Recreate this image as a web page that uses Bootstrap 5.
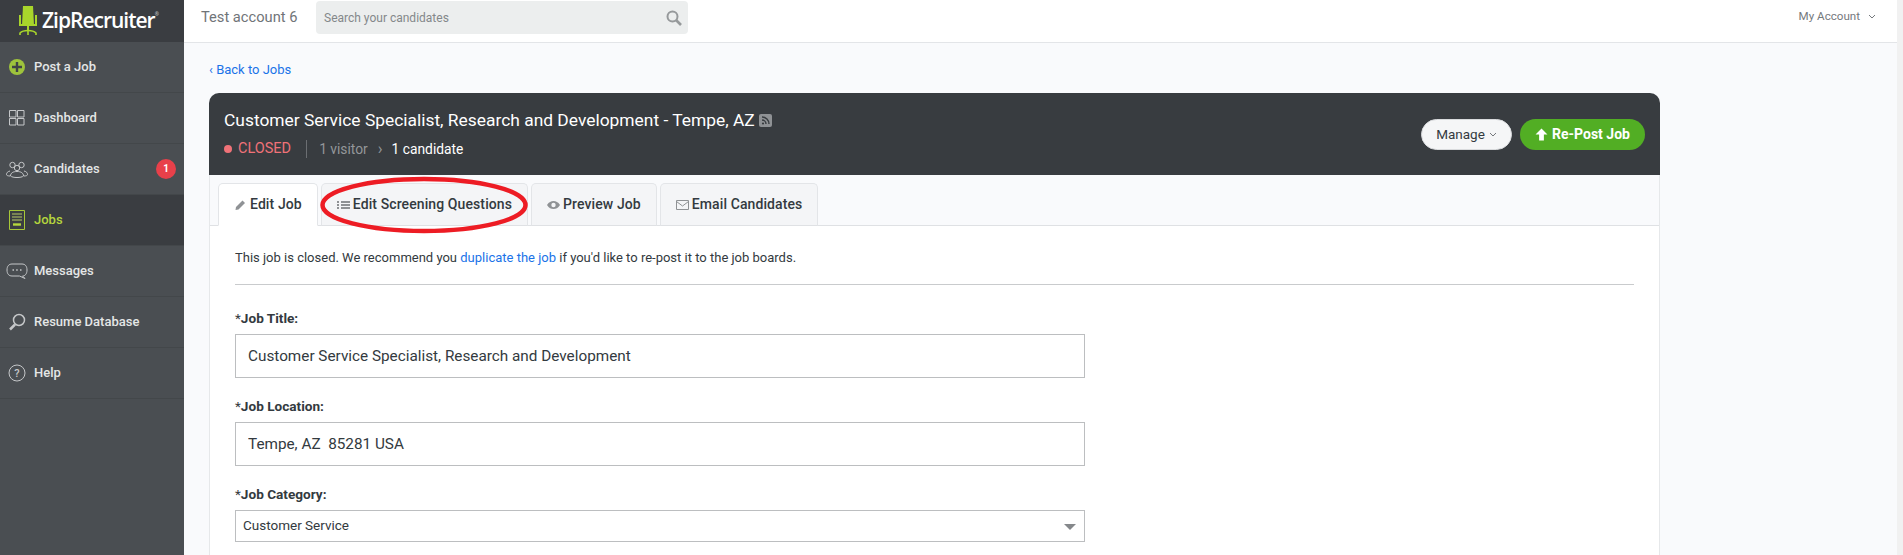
<!DOCTYPE html>
<html lang="en">
<head>
<meta charset="UTF-8">
<title>Edit Job</title>
<link rel="stylesheet" href="https://cdn.jsdelivr.net/npm/bootstrap@5.3.3/dist/css/bootstrap.min.css">
<style>
html, body { height: 555px; overflow: hidden; }
body { font-family: Roboto, "Liberation Sans", sans-serif; font-size: 13px; background: #f9fafc; color: #333a40; }
.app-shell { height: 555px; }
.side-col { width: 184px; flex: none; background: #4a4e52; }
.side-logo { height: 42px; background: #3a3d41; padding-left: 19px; gap: 5px; }
.logo-word { font-family: "Open Sans", sans-serif; font-size: 21px; font-weight: 600; color: #fff; letter-spacing: -1px; }
.logo-word sup { font-size: 5px; top: -12px; letter-spacing: 0; color: #c5c7c9; }
.side-item { height: 51px; padding-left: 6px; gap: 6px; color: #e4e6e6; font-size: 13px; font-weight: 500; border-bottom: 1px solid #43474a; text-decoration: none; position: relative; }
.side-item:hover { color: #fff; }
.side-item.is-on { background: #3a3d41; color: #b5d63d; }
.side-ico { width: 22px; height: 22px; flex: none; }
.side-badge { position: absolute; right: 8px; top: 15px; width: 20px; height: 20px; padding: 0; line-height: 20px; border-radius: 50%; background: #e8404a; font-size: 10px; }
.main-col { min-width: 0; }
.top-strip { height: 43px; background: #fff; border-bottom: 1px solid #e3e5e8; padding-left: 17px; padding-right: 21px; }
.acct-name { font-size: 14.7px; color: #707478; width: 115px; flex: none; white-space: nowrap; margin-top: 8px; line-height: 18px; }
.search-box { width: 372px; height: 33px; background: #eceeee; border-radius: 4px; margin-top: 1px; padding: 0 6px 0 8px; }
.search-box span { font-size: 12px; color: #84888a; }
.my-acct { font-size: 11.6px; color: #75797d; margin-top: 9px; line-height: 14px; }
.scroll-strip { width: 6px; flex: none; background: #f1f1f1; }
.page-wrap { padding: 20px 0 0 25px; width: 1476px; }
.back-link { font-size: 13px; color: #1a73e8; text-decoration: none; display: block; line-height: 14px; margin-bottom: 16px; }
.job-panel { position: relative; }
.job-head { height: 82px; background: #383c40; border-radius: 10px 10px 0 0; padding: 0 15px; color: #fff; }
.job-title { font-size: 17.4px; font-weight: 400; margin: 0 0 10px; line-height: 20px; }
.job-meta { font-size: 13.8px; color: #94979a; line-height: 16px; }
.closed-txt { color: #f07278; font-size: 14.5px; }
.closed-dot { width: 8px; height: 8px; border-radius: 50%; background: #f07278; display: inline-block; margin-right: 6px; }
.meta-rule { width: 1px; height: 18px; background: #6b6e72; margin: 0 12px 0 15px; }
.meta-sep { margin: 0 9px 0 10px; font-size: 16px; line-height: 16px; }
.btn-manage { background: #f5f6f7; color: #333a40; font-size: 13.5px; height: 31px; width: 91px; padding: 0; justify-content: center; border: 1px solid #d9dbdd; }
.btn-repost { background: #52ae24; color: #fff; font-size: 14px; font-weight: 700; height: 31px; width: 125px; padding: 0; justify-content: center; border: 0; }
.tab-area { border-left: 1px solid #e6e8ea; border-right: 1px solid #e6e8ea; padding: 8px 8px 0; }
.job-tabs { border-bottom: 1px solid #dfe1e4; gap: 3px; margin: 0 -8px; padding: 0 8px; }
.job-tabs .nav-link { height: 43px; margin-bottom: -1px; padding: 0 15px; font-size: 14px; font-weight: 500; color: #333a40; background: #f4f5f7; border: 1px solid #e3e5e8; border-bottom-color: #dfe1e4; border-radius: 5px 5px 0 0; display: flex; align-items: center; gap: 3px; letter-spacing: .1px; }
.job-tabs .nav-link.active { background: #fff; border-bottom-color: #fff; }
.tab-ico { width: 13px; height: 12px; flex: none; }
.form-area { background: #fff; border-left: 1px solid #e6e8ea; border-right: 1px solid #e6e8ea; padding: 24px 25px 0; height: 330px; }
.closed-note { font-size: 13px; line-height: 16px; margin-bottom: 18px; }
.closed-note a { color: #1a73e8; text-decoration: none; }
.form-area hr { margin: 0 0 26px; border-color: #c9cbcd; opacity: 1; }
.job-label { font-size: 13.6px; font-weight: 700; line-height: 15px; margin-bottom: 8px; display: block; }
.job-label i { font-style: normal; font-weight: 400; }
.job-input { width: 850px; height: 44px; border: 1px solid #bcbec0; border-radius: 0; font-size: 15.3px; color: #333a40; padding: 0 12px; margin-bottom: 21px; }
.job-select { width: 850px; height: 32px; border: 1px solid #bcbec0; border-radius: 0; font-size: 13.5px; color: #333a40; padding: 0 7px 2px; background-image: none; }
.select-wrap { width: 850px; position: relative; }
.select-arrow { position: absolute; right: 9px; top: 14px; width: 0; height: 0; border-left: 6px solid transparent; border-right: 6px solid transparent; border-top: 6px solid #85888b; }
.red-ring { position: absolute; left: 111px; top: 83px; width: 208px; height: 58px; pointer-events: none; }
</style>
</head>
<body>
<div class="app-shell d-flex">
  <nav class="side-col d-flex flex-column">
    <div class="side-logo d-flex align-items-center">
      <svg width="18" height="30" viewBox="0 0 18 30" fill="none"><path d="M4 0h10l1 19H3z" fill="#a8d52b"/><path d="M0 9h2v9h14V9h2v11H0z" fill="#a8d52b"/><path d="M8 20h2v5H8z" fill="#a8d52b"/><path d="M1 29v-2c2-2 5-2.500 8-2.500s6 .5 8 2.500v2" stroke="#a8d52b" stroke-width="1.600"/><path d="M9 25v4" stroke="#a8d52b" stroke-width="1.600"/></svg>
      <span class="logo-word">ZipRecruiter<sup>®</sup></span>
    </div>
    <a class="side-item d-flex align-items-center" href="#">
      <svg class="side-ico" viewBox="0 0 22 22"><circle cx="11" cy="11" r="8" fill="#9ec33c"/><path d="M11 6v10M6 11h10" stroke="#3f4347" stroke-width="2.400"/></svg>Post a Job</a>
    <a class="side-item d-flex align-items-center" href="#">
      <svg class="side-ico" viewBox="0 0 22 22" fill="none" stroke="#c5c7c9"><path d="M3.500 3.500h6.500v6.500H3.500zM11.500 3.500H18v6.500h-6.500zM3.500 11.500h6.500V18H3.500zM11.500 11.500H18V18h-6.500z"/></svg>Dashboard</a>
    <a class="side-item d-flex align-items-center" href="#">
      <svg class="side-ico" viewBox="0 0 22 22" fill="none" stroke="#c5c7c9"><circle cx="6.500" cy="7" r="2.700"/><circle cx="15.500" cy="7" r="2.700"/><circle cx="11" cy="10" r="2.700"/><path d="M4 13C1.500 13.500.5 15 .5 16.500c0 1 1.500 1.500 3.500 1.500M18 13c2.500.5 3.500 2 3.500 3.500 0 1-1.500 1.500-3.500 1.500M4.500 18c0-3 2.500-4.500 6.500-4.500s6.500 1.500 6.500 4.500c-2 2-11 2-13 0z"/></svg>Candidates
      <span class="badge side-badge">1</span></a>
    <a class="side-item is-on d-flex align-items-center" href="#">
      <svg class="side-ico" viewBox="0 0 22 22" fill="none" stroke="#b5d63d"><path d="M3.500 1.500h15v19h-15z" stroke="#a8c838"/><path d="M6 5h10M6 8h10M6 11h10" stroke="#8e9a5a" stroke-width="1.400"/><path d="M7 15.500h8" stroke-width="2.400"/></svg>Jobs</a>
    <a class="side-item d-flex align-items-center" href="#">
      <svg class="side-ico" viewBox="0 0 22 22" fill="none" stroke="#c5c7c9"><path d="M6 4h10c3 0 5 2 5 6s-2 6-4.500 6l2.500 2.500-5.500-2.500H6c-3 0-5-2-5-6s2-6 5-6z"/><path d="M6.500 10H8M10.200 10h1.500M14 10h1.500" stroke-width="1.600"/></svg>Messages</a>
    <a class="side-item d-flex align-items-center" href="#">
      <svg class="side-ico" viewBox="0 0 22 22" fill="none" stroke="#c5c7c9"><circle cx="13" cy="9" r="5.500" stroke-width="1.500"/><path d="M9 13.500 4 18.500" stroke-width="2.500"/></svg>Resume Database</a>
    <a class="side-item d-flex align-items-center" href="#">
      <svg class="side-ico" viewBox="0 0 22 22" fill="none" stroke="#c5c7c9"><circle cx="11" cy="11" r="8"/><text x="11" y="15" font-size="11" text-anchor="middle" fill="#c5c7c9" stroke="none" font-family="Roboto">?</text></svg>Help</a>
  </nav>

  <div class="main-col flex-grow-1">
    <header class="top-strip d-flex align-items-start">
      <span class="acct-name">Test account 6</span>
      <div class="search-box d-flex align-items-center justify-content-between">
        <span>Search your candidates</span>
        <svg width="16" height="16" viewBox="0 0 16 16" fill="none" stroke="#96999b" stroke-width="2"><circle cx="6.500" cy="6.500" r="5"/><path d="M10 10l5 5" stroke-width="2.600"/></svg>
      </div>
      <div class="my-acct ms-auto d-flex align-items-center gap-2">My Account
        <svg width="8" height="5" viewBox="0 0 8 5" fill="none" stroke="#75797d"><path d="M1 1l3 3 3-3"/></svg>
      </div>
    </header>

    <div class="page-wrap">
      <a class="back-link" href="#">&lsaquo; Back to Jobs</a>
      <section class="job-panel">
        <div class="job-head d-flex align-items-center justify-content-between">
          <div>
            <h1 class="job-title d-flex align-items-center gap-1">Customer Service Specialist, Research and Development - Tempe, AZ
              <svg width="13" height="13" viewBox="0 0 13 13"><rect width="13" height="13" rx="2" fill="#8f9295"/><path d="M3 3a7 7 0 0 1 7 7M3 6a4 4 0 0 1 4 4" stroke="#383c40" stroke-width="1.400" fill="none"/><circle cx="4" cy="9.500" r="1.100" fill="#383c40"/></svg>
            </h1>
            <div class="job-meta d-flex align-items-center">
              <span class="closed-dot"></span><span class="closed-txt">CLOSED</span>
              <span class="meta-rule"></span>
              <span>1 visitor</span><span class="meta-sep">&rsaquo;</span><span class="text-white">1 candidate</span>
            </div>
          </div>
          <div class="d-flex gap-2">
            <button type="button" class="btn btn-manage rounded-pill d-flex align-items-center gap-1">Manage
              <svg width="8" height="5" viewBox="0 0 8 5" fill="none" stroke="#75797d"><path d="M1 1l3 3 3-3"/></svg></button>
            <button type="button" class="btn btn-repost rounded-pill d-flex align-items-center gap-1">
              <svg width="13" height="13" viewBox="0 0 12 12" fill="#fff"><path d="M6 .5 11.500 6H8.200v5.500H3.800V6H.5z"/></svg>Re-Post Job</button>
          </div>
        </div>
        <div class="tab-area">
          <ul class="nav job-tabs">
            <li class="nav-item"><a class="nav-link active" href="#">
              <svg class="tab-ico" viewBox="0 0 13 12" fill="#8f9295"><path d="M2 8 8.500 1.500l2.500 2.500L4.500 10.500 1.500 11z"/></svg>Edit Job</a></li>
            <li class="nav-item"><a class="nav-link" href="#">
              <svg class="tab-ico" viewBox="0 0 13 12" fill="#8f9295"><path d="M0 2h2v2H0zM4 2h9v2H4zM0 5h2v2H0zM4 5h9v2H4zM0 8h2v2H0zM4 8h9v2H4z"/></svg>Edit Screening Questions</a></li>
            <li class="nav-item"><a class="nav-link" href="#">
              <svg class="tab-ico" viewBox="0 0 13 12" fill="#8f9295"><path d="M0 6c2-3 4-4 6.500-4S11 3 13 6c-2 3-4 4-6.500 4S2 9 0 6z"/><circle cx="6.500" cy="6" r="2.200" fill="#f4f5f7"/></svg>Preview Job</a></li>
            <li class="nav-item"><a class="nav-link" href="#">
              <svg class="tab-ico" viewBox="0 0 13 12" fill="none" stroke="#8f9295"><path d="M.5 1.500h12v9H.5zM.5 2.500l6 4.500 6-4.500"/></svg>Email Candidates</a></li>
          </ul>
        </div>
        <div class="form-area">
          <p class="closed-note">This job is closed. We recommend you <a href="#">duplicate the job</a> if you'd like to re-post it to the job boards.</p>
          <hr>
          <label class="job-label"><i>*</i>Job Title:</label>
          <input class="form-control job-input" type="text" value="Customer Service Specialist, Research and Development">
          <label class="job-label"><i>*</i>Job Location:</label>
          <input class="form-control job-input" type="text" value="Tempe, AZ  85281 USA">
          <label class="job-label"><i>*</i>Job Category:</label>
          <div class="select-wrap">
            <select class="form-select job-select"><option>Customer Service</option></select>
            <span class="select-arrow"></span>
          </div>
        </div>
        <svg class="red-ring" viewBox="0 0 208 58" fill="none"><ellipse cx="104" cy="29" rx="101.500" ry="26" stroke="#ed1c24" stroke-width="4.500"/></svg>
      </section>
    </div>
  </div>
  <div class="scroll-strip"></div>
</div>
<script src="https://cdn.jsdelivr.net/npm/bootstrap@5.3.3/dist/js/bootstrap.bundle.min.js"></script>
</body>
</html>
